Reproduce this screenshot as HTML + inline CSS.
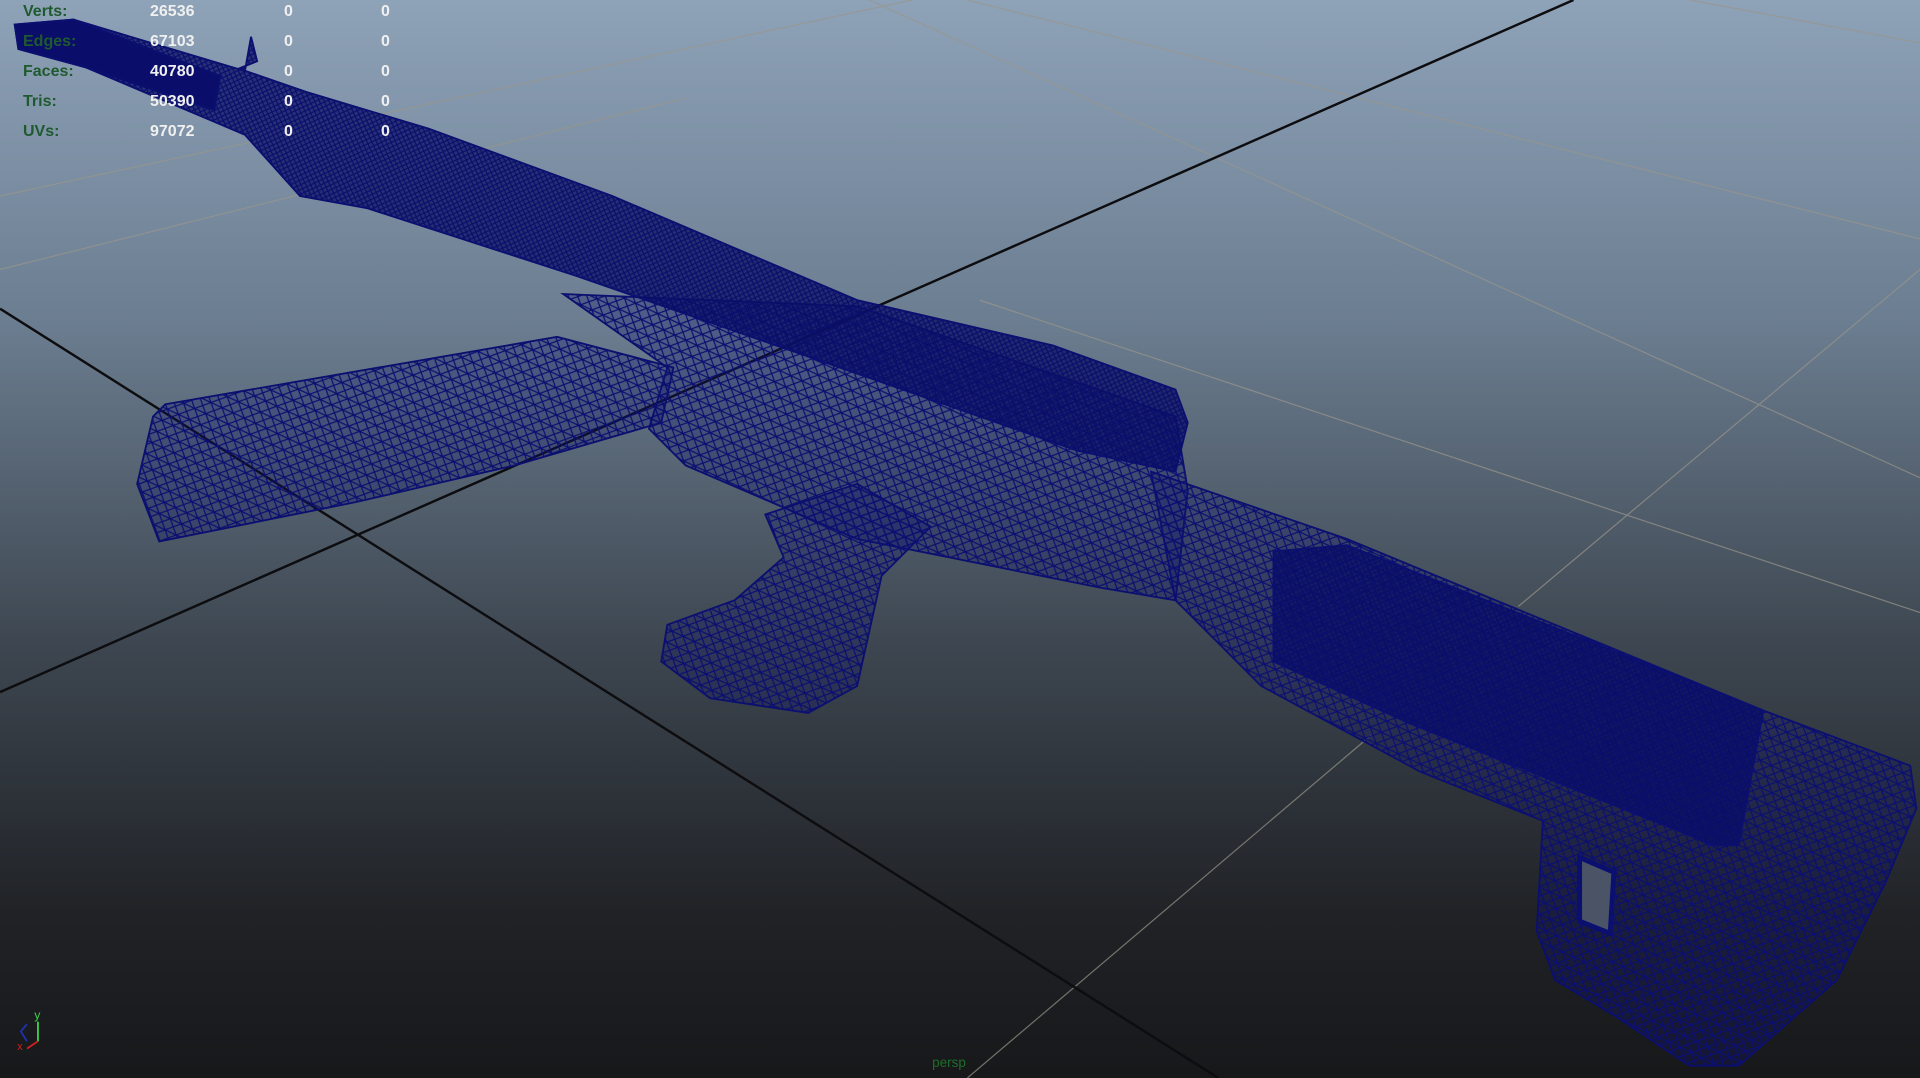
<!DOCTYPE html>
<html><head><meta charset="utf-8"><style>
html,body{margin:0;padding:0;width:1920px;height:1078px;overflow:hidden;background:#18191b}
svg{display:block}
.hud{position:absolute;font-family:"Liberation Sans",sans-serif;font-weight:bold;font-size:16px}
</style></head><body>
<svg width="1920" height="1078" viewBox="0 0 1568 880" preserveAspectRatio="none" style="position:absolute;left:0;top:0">
<defs>
<linearGradient id="bg" x1="0" y1="0" x2="0" y2="1">
<stop offset="0" stop-color="#8ea2b8"/>
<stop offset="0.3" stop-color="#6b7d90"/>
<stop offset="0.6" stop-color="#3d4650"/>
<stop offset="0.85" stop-color="#202226"/>
<stop offset="1" stop-color="#17181a"/>
</linearGradient>
<pattern id="mesh" width="10" height="10" patternUnits="userSpaceOnUse" patternTransform="rotate(25)">
<rect width="10" height="10" fill="rgba(14,18,110,0.3)"/>
<path d="M0 0L10 10M10 0L0 10M0 5H10" stroke="#0b0f70" stroke-width="1"/>
</pattern>
<pattern id="mesh2" width="5" height="5" patternUnits="userSpaceOnUse" patternTransform="rotate(20)">
<rect width="5" height="5" fill="rgba(10,14,100,0.75)"/>
<path d="M0 0L5 5M5 0L0 5" stroke="#0a0e6c" stroke-width="1"/>
</pattern>
</defs>
<rect width="1568" height="880" fill="url(#bg)"/>
<g stroke="#9a968a" stroke-width="1" opacity="0.7" fill="none">
<line x1="0" y1="160" x2="745" y2="0"/>
<line x1="0" y1="220" x2="560" y2="80"/>
<line x1="710" y1="0" x2="1568" y2="390"/>
<line x1="790" y1="0" x2="1568" y2="195"/>
<line x1="1380" y1="0" x2="1568" y2="35"/>
<line x1="800" y1="245" x2="1568" y2="500"/>
<line x1="1568" y1="220" x2="1240" y2="495"/>
<line x1="1120" y1="600" x2="790" y2="880"/>
</g>
<g stroke="#0d0d10" stroke-width="2" fill="none">
<line x1="0" y1="252" x2="995" y2="880"/>
<line x1="1285" y1="0" x2="0" y2="565"/>
</g>
<g stroke="#0b0f70" stroke-width="1.5">
<!-- magazine -->
<path d="M135 330 L455 275 L550 300 L540 345 L420 380 L290 410 L130 442 L112 395 L125 340 Z" fill="url(#mesh)"/>
<!-- grip -->
<path d="M625 420 L700 395 L760 430 L720 470 L700 560 L660 582 L580 570 L540 540 L545 510 L600 490 L640 455 Z" fill="url(#mesh)"/>
<!-- receiver -->
<path d="M460 240 L700 250 L960 340 L970 400 L960 490 L900 480 L700 440 L560 380 L530 350 L545 300 Z" fill="url(#mesh)"/>
<!-- barrel / top -->
<path d="M12 20 L60 16 L200 58 L205 30 L210 50 L195 56 L250 75 L350 105 L500 160 L700 245 L860 282 L960 318 L970 345 L960 385 L880 368 L700 305 L470 225 L300 170 L245 160 L200 110 L70 55 L15 40 Z" fill="url(#mesh2)"/>
<path d="M12 20 L60 16 L180 62 L175 90 L70 55 L15 40 Z" fill="#0a0e6a"/>
<!-- stock body -->
<path d="M940 385 L1100 440 L1440 580 L1560 625 L1565 660 L1540 720 L1500 800 L1420 870 L1380 870 L1320 830 L1270 800 L1255 760 L1260 670 L1160 630 L1030 560 L960 490 Z" fill="url(#mesh)"/>
<path d="M1040 450 L1100 445 L1440 580 L1420 690 L1400 690 L1150 590 L1040 540 Z" fill="url(#mesh2)"/>
<path d="M1290 700 L1318 712 L1315 762 L1290 752 Z" fill="#4a5466" stroke="#0b0f70" stroke-width="4"/>
</g>
<text x="775" y="871" fill="#1e6d2a" font-family="Liberation Sans,sans-serif" font-size="11" text-anchor="middle">persp</text>
<g stroke-width="1.5" fill="none">
<line x1="31" y1="834" x2="31" y2="850" stroke="#3ed04a"/>
<line x1="31" y1="850" x2="22" y2="856" stroke="#d02020"/>
<path d="M22 836 L17 842 L22 850" stroke="#2030b0"/>
</g>
<text x="28" y="832" fill="#3ed04a" font-family="Liberation Sans,sans-serif" font-size="10">y</text>
<text x="14" y="857" fill="#d02020" font-family="Liberation Sans,sans-serif" font-size="9">x</text>
</svg>
<div class="hud" style="left:23px;top:-3px;color:#1f5a2e;line-height:30px">Verts:<br>Edges:<br>Faces:<br>Tris:<br>UVs:</div>
<div class="hud" style="left:150px;top:-3px;color:#f0f0f0;line-height:30px">26536<br>67103<br>40780<br>50390<br>97072</div>
<div class="hud" style="left:284px;top:-3px;color:#f0f0f0;line-height:30px">0<br>0<br>0<br>0<br>0</div>
<div class="hud" style="left:381px;top:-3px;color:#f0f0f0;line-height:30px">0<br>0<br>0<br>0<br>0</div>
</body></html>
